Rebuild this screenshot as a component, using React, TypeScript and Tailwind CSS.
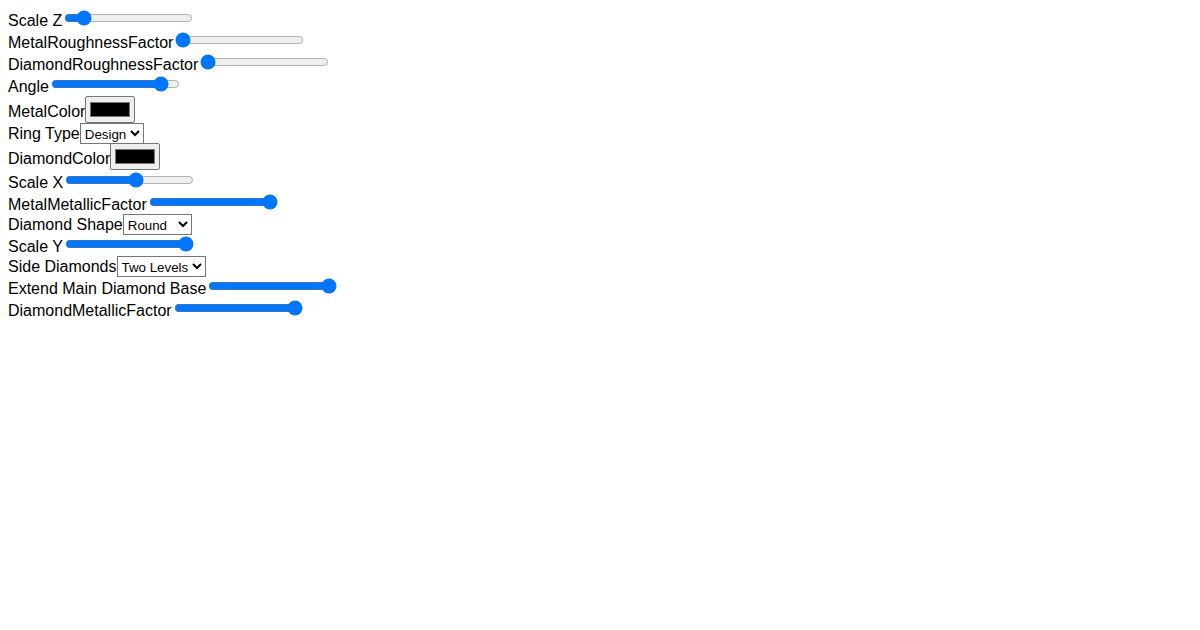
import { useState } from 'react'

type Row =
  | { kind: 'range'; label: string; value: number }
  | { kind: 'color'; label: string; value: string }
  | { kind: 'select'; label: string; value: string; options: string[]; width?: string }

const rows: Row[] = [
  { kind: 'range', label: 'Scale Z', value: 0.1 },
  { kind: 'range', label: 'MetalRoughnessFactor', value: 0 },
  { kind: 'range', label: 'DiamondRoughnessFactor', value: 0 },
  { kind: 'range', label: 'Angle', value: 0.9 },
  { kind: 'color', label: 'MetalColor', value: '#000000' },
  { kind: 'select', label: 'Ring Type', value: 'Design', options: ['Design'] },
  { kind: 'color', label: 'DiamondColor', value: '#000000' },
  { kind: 'range', label: 'Scale X', value: 0.56 },
  { kind: 'range', label: 'MetalMetallicFactor', value: 1 },
  { kind: 'select', label: 'Diamond Shape', value: 'Round', options: ['Round', 'Princess', 'Oval'], width: 'w-[69px]' },
  { kind: 'range', label: 'Scale Y', value: 1 },
  { kind: 'select', label: 'Side Diamonds', value: 'Two Levels', options: ['None', 'One Level', 'Two Levels'] },
  { kind: 'range', label: 'Extend Main Diamond Base', value: 1 },
  { kind: 'range', label: 'DiamondMetallicFactor', value: 1 },
]

function Control({ row }: { row: Row }) {
  const [value, setValue] = useState<string | number>(row.value)

  if (row.kind === 'range') {
    return (
      <input
        type="range"
        min={0}
        max={1}
        step={0.01}
        value={value}
        onChange={(e) => setValue(e.target.value)}
        className="m-[2px] h-4 w-[129px]"
      />
    )
  }
  if (row.kind === 'color') {
    return (
      <input
        type="color"
        value={value as string}
        onChange={(e) => setValue(e.target.value)}
        className="h-[27px] w-[50px] rounded-[2px] border border-[#767676] bg-[#efefef] px-[2px] py-[1px]"
      />
    )
  }
  return (
    <select
      value={value}
      onChange={(e) => setValue(e.target.value)}
      className={`-mb-px border border-[#767676] bg-white pt-[2px] pb-0 text-[13.333px] leading-[normal] ${row.width ?? ''}`}
    >
      {row.options.map((o) => (
        <option key={o}>{o}</option>
      ))}
    </select>
  )
}

export default function App() {
  return (
    <div className="min-h-screen bg-white p-2 font-['Liberation_Sans',Arial,sans-serif] text-base leading-[normal] text-black">
      {rows.map((row) => (
        <div key={row.label}>
          {row.label}
          <Control row={row} />
        </div>
      ))}
    </div>
  )
}
